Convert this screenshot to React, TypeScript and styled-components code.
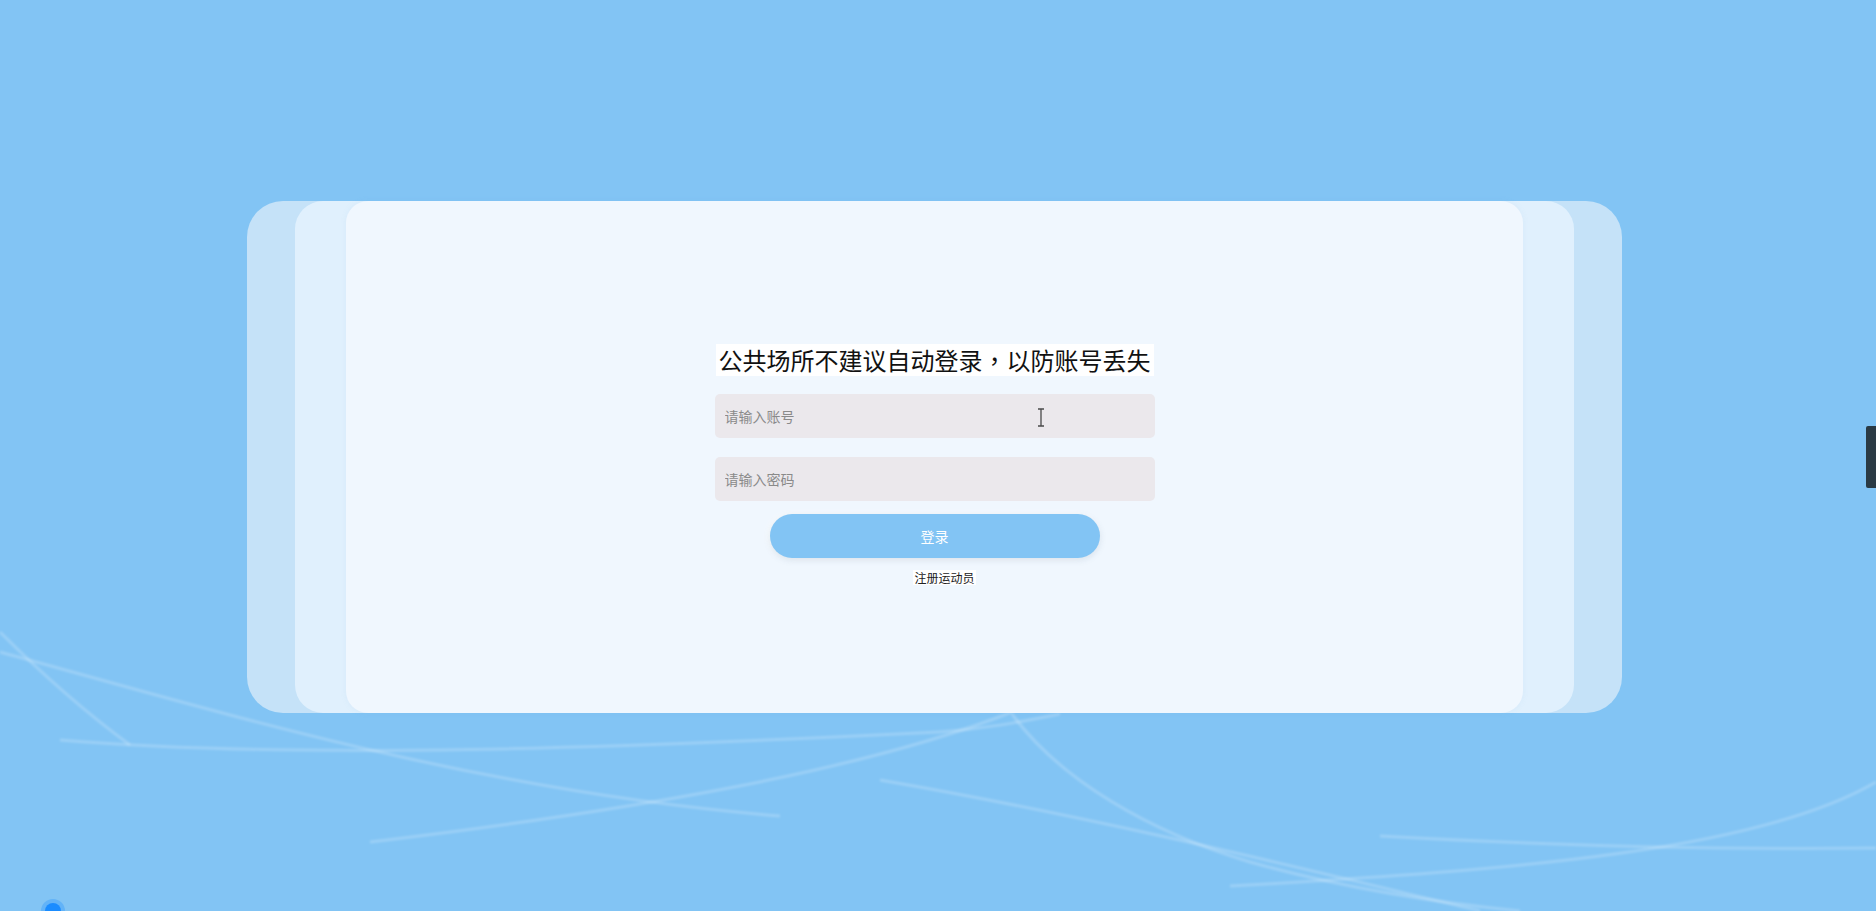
import React from 'react';
import styled, { createGlobalStyle } from 'styled-components';

const GlobalStyle = createGlobalStyle`
  html, body {
    margin: 0;
    padding: 0;
  }
  body {
    font-family: "Noto Sans CJK SC", "Noto Sans", sans-serif;
    background: #82c4f4;
  }
`;

const Page = styled.div`
  position: relative;
  min-height: 100vh;
  display: flex;
  align-items: center;
  justify-content: center;
  padding-right: 7px;
  padding-top: 3px;
  box-sizing: border-box;
  background: #82c4f4;
  overflow: hidden;
`;

const Waves = styled.svg`
  position: absolute;
  inset: 0;
  width: 100%;
  height: 100%;
  pointer-events: none;
`;

const Layer = styled.div<{ $bg: string; $radius: number; $pad?: number }>`
  display: flex;
  flex: 1;
  background: ${(p) => p.$bg};
  border-radius: ${(p) => p.$radius}px;
  padding: 0 ${(p) => p.$pad ?? 0}px;
`;

const Card = styled(Layer)`
  position: relative;
  z-index: 1;
  flex: none;
  width: 1375px;
  height: 512px;
  box-sizing: border-box;
`;

const Inner = styled.div`
  flex: 1;
  display: flex;
  flex-direction: column;
  align-items: center;
  padding-top: 143px;
  background: #f0f7fe;
  border-radius: 22px;
  box-shadow: 0 0 6px rgba(120, 160, 200, 0.08);
`;

const Form = styled.form`
  width: 440px;
  display: flex;
  flex-direction: column;
  align-items: center;
`;

const Notice = styled.h2`
  margin: 0 0 18px;
  padding: 0 3px;
  font-size: 24px;
  line-height: 32px;
  font-weight: 400;
  color: #111;
  background: #fff;
`;

const Punct = styled.span`
  font-family: "Noto Sans CJK TC", "Noto Sans CJK SC", sans-serif;
`;

const Field = styled.div`
  position: relative;
  width: 100%;
  margin-bottom: 19px;

  &:last-of-type {
    margin-bottom: 13px;
  }
`;

const Input = styled.input`
  display: block;
  width: 100%;
  height: 44px;
  box-sizing: border-box;
  border: none;
  outline: none;
  border-radius: 5px;
  padding: 0 10px;
  background: #ebe8ec;
  font-family: inherit;
  font-size: 14px;
  color: #333;

  &::placeholder {
    color: #8a8a8a;
  }
`;

const Caret = styled.svg`
  position: absolute;
  left: 322px;
  top: 14px;
  pointer-events: none;
`;

const LoginButton = styled.button`
  width: 330px;
  height: 44px;
  border: none;
  border-radius: 22px;
  background: #82c4f4;
  color: #fff;
  font-family: inherit;
  font-size: 14px;
  box-shadow: 0 2px 6px rgba(90, 120, 150, 0.18), -2px 0 6px rgba(255, 255, 255, 0.9);
  cursor: pointer;
`;

const RegisterLink = styled.a`
  margin: 12px 0 0 20px;
  padding: 0 1px;
  font-size: 12px;
  line-height: 15px;
  color: #222;
  background: #fff;
  text-decoration: none;
  cursor: pointer;
`;

const SideTab = styled.div`
  position: absolute;
  right: 0;
  top: 426px;
  width: 10px;
  height: 62px;
  background: #2a3a44;
  border-radius: 2px 0 0 2px;
`;

const FloatDot = styled.div`
  position: absolute;
  left: 45px;
  bottom: -8px;
  width: 16px;
  height: 16px;
  border-radius: 50%;
  background: #1a8cff;
  box-shadow: 0 0 0 4px rgba(40, 150, 255, 0.35);
`;

const wavePaths = [
  'M0,632 C40,672 85,712 130,745',
  'M0,652 C220,712 480,792 780,816',
  'M60,740 C300,760 620,748 938,732 C985,729 1020,722 1060,714',
  'M370,842 C620,812 860,772 1012,712',
  'M1012,714 C1060,780 1150,832 1250,862 C1350,890 1440,903 1520,911',
  'M880,780 C1100,818 1300,868 1480,911',
  'M1876,782 C1760,850 1520,870 1230,886',
  'M1380,836 C1560,846 1720,850 1876,848',
];

export default function App() {
  return (
    <>
      <GlobalStyle />
      <Page>
        <Waves viewBox="0 0 1876 911" preserveAspectRatio="none">
          <defs>
            <filter id="soft" x="-5%" y="-5%" width="110%" height="110%">
              <feGaussianBlur stdDeviation="0.9" />
            </filter>
          </defs>
          <g filter="url(#soft)">
            {wavePaths.map((d, i) => (
              <path key={i} d={d} fill="none" stroke="#ffffff" strokeOpacity={0.2} strokeWidth={3} />
            ))}
          </g>
        </Waves>

        <Card $bg="#c5e2f8" $radius={36} $pad={48}>
          <Layer $bg="#e0f0fd" $radius={28} $pad={51}>
            <Inner>
              <Form onSubmit={(e) => e.preventDefault()}>
                <Notice>
                  公共场所不建议自动登录<Punct>，</Punct>以防账号丢失
                </Notice>
                <Field>
                  <Input placeholder="请输入账号" />
                  <Caret width="8" height="19" viewBox="0 0 8 19">
                    <path d="M1,1 H7 M4,1 V18 M1,18 H7" stroke="#4a4a4a" strokeWidth="1.3" fill="none" />
                  </Caret>
                </Field>
                <Field>
                  <Input type="password" placeholder="请输入密码" />
                </Field>
                <LoginButton type="submit">登录</LoginButton>
                <RegisterLink>注册运动员</RegisterLink>
              </Form>
            </Inner>
          </Layer>
        </Card>

        <SideTab />
        <FloatDot />
      </Page>
    </>
  );
}
